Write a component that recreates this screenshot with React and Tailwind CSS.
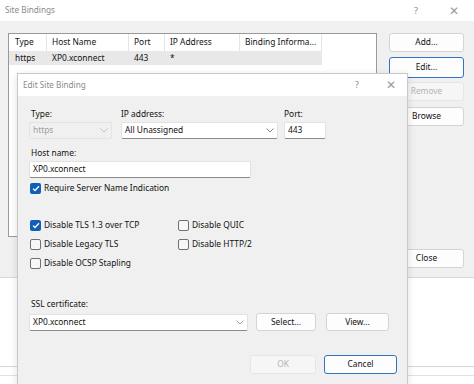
const font = { fontFamily: '"Noto Sans", "Open Sans", sans-serif' }

function Chevron({ className = '' }) {
  return (
    <svg width="8" height="5" viewBox="0 0 8 5" className={className}>
      <path d="M0.5 0.5 L4 4 L7.5 0.5" fill="none" stroke="currentColor" strokeWidth="1" />
    </svg>
  )
}

function Check({ checked, label }) {
  return (
    <div className="flex items-center gap-[3px] h-[14px]">
      {checked ? (
        <span className="w-[11px] h-[11px] rounded-[2px] bg-[#0f5fb8] flex items-center justify-center">
          <svg width="8" height="7" viewBox="0 0 8 7">
            <path d="M1 3.6 L3 5.5 L7 1.2" fill="none" stroke="white" strokeWidth="1.3" />
          </svg>
        </span>
      ) : (
        <span className="w-[11px] h-[11px] rounded-[2px] border border-[#707070] bg-[#f7f7f7]" />
      )}
      <span className="text-[8.4px] text-[#111] whitespace-nowrap">{label}</span>
    </div>
  )
}

function Btn({ children, focus, disabled, className = '' }) {
  return (
    <div
      className={`flex items-center justify-center rounded-[3px] text-[8.4px] border whitespace-nowrap ${
        focus ? 'border-[#2f74c4] bg-[#fdfdfd] text-[#111]' : disabled ? 'border-[#e6e6e6] bg-[#f6f6f6] text-[#b5b5b5]' : 'border-[#d4d4d4] bg-[#fdfdfd] text-[#111]'
      } ${className}`}
    >
      {children}
    </div>
  )
}

function SiteBindings() {
  return (
    <div className="w-[474px]">
      <div className="h-[21px] bg-white flex items-center px-[5px] text-[8.2px] text-[#8a8a8a]">
        <span className="flex-1">Site Bindings</span>
        <span className="w-[30px] text-center mr-[8px] text-[9px]">?</span>
        <span className="w-[30px] text-center text-[12px] text-[#9a9a9a]">✕</span>
      </div>
      <div className="h-[257px] bg-[#f0f0f0] border-b border-[#d8d8d8] flex gap-[12px] pl-[8px] pt-[12px]">
        <div className="w-[369px] h-[204px] bg-white border border-[#9a9a9a] text-[8.4px] text-[#111] whitespace-nowrap">
          <div className="flex h-[17px] items-center">
            <div className="w-[38px] pl-[6px] border-r border-[#e5e5e5] h-full flex items-center">Type</div>
            <div className="w-[82px] pl-[5px] border-r border-[#e5e5e5] h-full flex items-center">Host Name</div>
            <div className="w-[36px] pl-[5px] border-r border-[#e5e5e5] h-full flex items-center">Port</div>
            <div className="w-[75px] pl-[5px] border-r border-[#e5e5e5] h-full flex items-center">IP Address</div>
            <div className="w-[82px] pl-[5px] border-r border-[#e5e5e5] h-full flex items-center">Binding Informa...</div>
          </div>
          <div className="flex h-[14px] items-center bg-[#e8e8e8] w-[313px]">
            <div className="w-[38px] pl-[6px]">https</div>
            <div className="w-[82px] pl-[5px]">XP0.xconnect</div>
            <div className="w-[36px] pl-[5px]">443</div>
            <div className="w-[75px] pl-[5px]">*</div>
          </div>
        </div>
        <div className="w-[75px] flex flex-col">
          <Btn className="h-[19px]">Add...</Btn>
          <Btn className="h-[21px] mt-[5px]" focus>Edit...</Btn>
          <Btn className="h-[19px] mt-[4px]" disabled>Remove</Btn>
          <Btn className="h-[19px] mt-[6px]">Browse</Btn>
          <Btn className="h-[19px] mt-[123px]">Close</Btn>
        </div>
      </div>
    </div>
  )
}

function Field({ children, className = '' }) {
  return (
    <div className={`h-[17px] bg-white border-b border-[#8a8a8a] border-t border-l border-r border-t-[#e2e2e2] border-l-[#e2e2e2] border-r-[#e2e2e2] rounded-[2px] flex items-center px-[3px] text-[8.4px] text-[#111] ${className}`}>
      {children}
    </div>
  )
}

function EditDialog() {
  return (
    <div className="absolute left-[17px] top-[73px] w-[391px] h-[320px] border border-[#c8c8c8] bg-[#f0f0f0] shadow-[0_2px_8px_rgba(0,0,0,0.12)]">
      <div className="h-[22px] bg-white flex items-center pl-[5px] text-[8.2px] text-[#8a8a8a]">
        <span className="flex-1">Edit Site Binding</span>
        <span className="w-[20px] text-center mr-[14px] text-[9px]">?</span>
        <span className="w-[20px] text-center text-[12px] text-[#9a9a9a] mr-[6px]">✕</span>
      </div>
      <div className="px-[11px] pt-[11px] text-[8.4px] text-[#111]">
        <div className="flex gap-[9px]">
          <div className="w-[83px] flex flex-col gap-[1px]">
            <span className="pl-[2px] h-[14px] leading-[14px]">Type:</span>
            <div className="h-[17px] flex items-center px-[3px] text-[#a0a0a0] border border-[#e4e4e4] rounded-[2px]">
              <span className="flex-1">https</span>
              <Chevron className="text-[#c0c0c0]" />
            </div>
          </div>
          <div className="w-[157px] flex flex-col gap-[1px]">
            <span className="h-[14px] leading-[14px]">IP address:</span>
            <Field>
              <span className="flex-1">All Unassigned</span>
              <Chevron className="text-[#808080]" />
            </Field>
          </div>
          <div className="w-[42px] flex flex-col gap-[1px] ml-[-3px]">
            <span className="h-[14px] leading-[14px]">Port:</span>
            <Field>443</Field>
          </div>
        </div>
        <div className="flex flex-col gap-[1px] mt-[7px] w-[222px]">
          <span className="pl-[2px] h-[14px] leading-[14px]">Host name:</span>
          <Field>XP0.xconnect</Field>
        </div>
        <div className="mt-[3px] ml-[1px]">
          <Check checked label="Require Server Name Indication" />
        </div>
        <div className="mt-[23px] ml-[1px] flex">
          <div className="w-[148px] flex flex-col gap-[5px]">
            <Check checked label="Disable TLS 1.3 over TCP" />
            <Check label="Disable Legacy TLS" />
            <Check label="Disable OCSP Stapling" />
          </div>
          <div className="flex flex-col gap-[5px]">
            <Check label="Disable QUIC" />
            <Check label="Disable HTTP/2" />
          </div>
        </div>
        <div className="mt-[27px] flex flex-col gap-[2px]">
          <span className="pl-[2px] h-[14px] leading-[14px]">SSL certificate:</span>
          <div className="flex items-center">
            <Field className="w-[219px]">
              <span className="flex-1">XP0.xconnect</span>
              <Chevron className="text-[#a0a0a0]" />
            </Field>
            <Btn className="w-[60px] h-[18px] ml-[8px]">Select...</Btn>
            <Btn className="w-[63px] h-[18px] ml-[10px]">View...</Btn>
          </div>
        </div>
        <div className="mt-[24px] flex justify-end gap-[8px] mr-[-1px]">
          <Btn className="w-[66px] h-[19px]" disabled>OK</Btn>
          <Btn className="w-[73px] h-[19px]" focus>Cancel</Btn>
        </div>
      </div>
    </div>
  )
}

export default function App() {
  return (
    <div className="relative w-[474px] h-[384px] overflow-hidden bg-white" style={font}>
      <SiteBindings />
      <div className="absolute left-0 right-0 top-[366px] border-t border-[#d6d6d6]" />
      <div className="absolute left-0 right-0 top-[375px] border-t border-[#e2e2e2]" />
      <EditDialog />
    </div>
  )
}
